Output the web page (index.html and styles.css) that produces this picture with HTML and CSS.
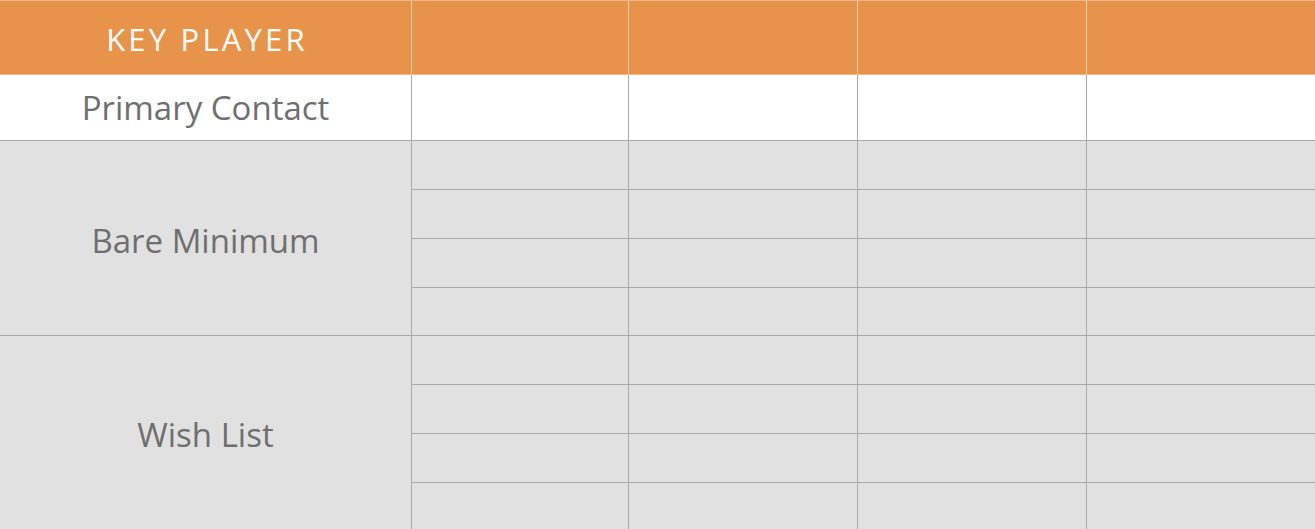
FILE: index.html
```html
<!DOCTYPE html>
<html>
<head>
<meta charset="utf-8">
<link rel="stylesheet" href="styles.css">
</head>
<body>
<div class="sheet">
  <div class="cell head first"><span class="head-label">KEY PLAYER</span></div>
  <div class="cell head"></div>
  <div class="cell head"></div>
  <div class="cell head"></div>
  <div class="cell head"></div>

  <div class="cell white first label">Primary Contact</div>
  <div class="cell white"></div>
  <div class="cell white"></div>
  <div class="cell white"></div>
  <div class="cell white"></div>

  <div class="cell gray first label r3">Bare Minimum</div>
  <div class="cell gray"></div><div class="cell gray"></div><div class="cell gray"></div><div class="cell gray"></div>
  <div class="cell gray"></div><div class="cell gray"></div><div class="cell gray"></div><div class="cell gray"></div>
  <div class="cell gray"></div><div class="cell gray"></div><div class="cell gray"></div><div class="cell gray"></div>
  <div class="cell gray"></div><div class="cell gray"></div><div class="cell gray"></div><div class="cell gray"></div>

  <div class="cell gray first label r7">Wish List</div>
  <div class="cell gray"></div><div class="cell gray"></div><div class="cell gray"></div><div class="cell gray"></div>
  <div class="cell gray"></div><div class="cell gray"></div><div class="cell gray"></div><div class="cell gray"></div>
  <div class="cell gray"></div><div class="cell gray"></div><div class="cell gray"></div><div class="cell gray"></div>
  <div class="cell gray"></div><div class="cell gray"></div><div class="cell gray"></div><div class="cell gray"></div>
</div>
</body>
</html>
```

FILE: styles.css
```css
html, body {
  margin: 0;
  padding: 0;
  background: #ffffff;
}
.sheet {
  width: 1315px;
  height: 529px;
  display: grid;
  grid-template-columns: 411px 217px 229px 229px 229px;
  grid-template-rows: 75px 65px 49px 49px 49px 48px 49px 49px 49px 47px;
  font-family: "Open Sans", "Liberation Sans", sans-serif;
  overflow: hidden;
}
.cell {
  box-sizing: border-box;
  border-left: 1px solid #a9a9a9;
  border-top: 1px solid #a9a9a9;
  display: flex;
  align-items: center;
  justify-content: center;
}
.cell.first {
  border-left: none;
}
.head {
  background: #e8934a;
  border-top: 1px solid #f1b88a;
  border-bottom: 1px solid #f2b88a;
  border-left: 1px solid #f5cfae;
}
.white {
  background: #ffffff;
  border-top: none;
}
.gray {
  background: #e1e1e1;
}
.head-label {
  color: #ffffff;
  font-size: 31px;
  letter-spacing: 3.2px;
  padding-top: 2px;
  padding-left: 3px;
}
.label {
  color: #6f6f6f;
  font-size: 33px;
}
.r3 { grid-row: 3 / span 4; grid-column: 1; padding-top: 4px; }
.r7 { grid-row: 7 / span 4; grid-column: 1; padding-top: 4px; }
```
